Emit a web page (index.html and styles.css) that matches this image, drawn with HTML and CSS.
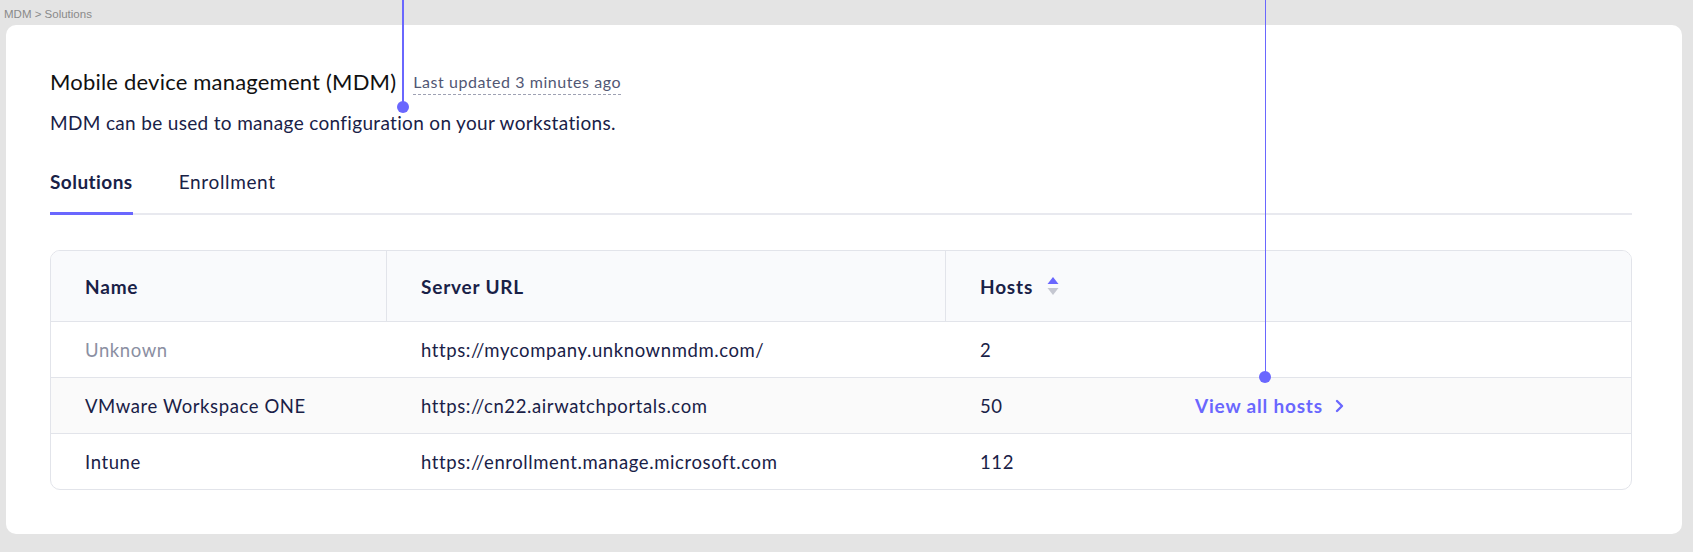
FILE: index.html
```html
<!DOCTYPE html>
<html lang="en">
<head>
<meta charset="utf-8">
<title>MDM Solutions</title>
<link rel="stylesheet" href="styles.css">
</head>
<body>
<div class="page">
  <div class="breadcrumb">MDM &gt; Solutions</div>
  <main class="card">
    <div class="title-row">
      <h1 class="title">Mobile device management (MDM)</h1>
      <span class="updated">Last updated 3 minutes ago</span>
    </div>
    <p class="desc">MDM can be used to manage configuration on your workstations.</p>
    <nav class="tabs">
      <span class="tab active">Solutions</span>
      <span class="tab">Enrollment</span>
    </nav>
    <div class="table">
      <div class="row head">
        <div class="cell hcell">Name</div>
        <div class="cell hcell">Server URL</div>
        <div class="cell hcell last">Hosts
          <svg class="sort" width="12" height="20" viewBox="0 0 12 20"><path d="M6 1 L11.5 8 H0.5 Z" fill="#6a67fe"/><path d="M6 19 L11.5 12 H0.5 Z" fill="#c5c7d1"/></svg>
        </div>
      </div>
      <div class="row">
        <div class="cell muted">Unknown</div>
        <div class="cell">https://mycompany.unknownmdm.com/</div>
        <div class="cell">2</div>
        <div class="cell"></div>
      </div>
      <div class="row hover">
        <div class="cell">VMware Workspace ONE</div>
        <div class="cell">https://cn22.airwatchportals.com</div>
        <div class="cell">50</div>
        <div class="cell"><a class="link">View all hosts <svg class="chev" width="9" height="14" viewBox="0 0 9 14"><path d="M2 2 L7 7 L2 12" fill="none" stroke="#6a67fe" stroke-width="2.4" stroke-linecap="round" stroke-linejoin="round"/></svg></a></div>
      </div>
      <div class="row lastrow">
        <div class="cell">Intune</div>
        <div class="cell">https://enrollment.manage.microsoft.com</div>
        <div class="cell">112</div>
        <div class="cell"></div>
      </div>
    </div>
  </main>
  <div class="pin pin-a"></div>
  <div class="pin pin-b"></div>
</div>
</body>
</html>
```
FILE: styles.css
```css
* { box-sizing: border-box; }
html, body { margin: 0; padding: 0; }
body {
  background: #e4e4e4;
  font-family: Lato, "Noto Sans", sans-serif;
  color: #192147;
  height: 552px;
  overflow: hidden;
}
.page {
  position: relative;
  padding: 0 11px 0 6px;
}
.breadcrumb {
  font-family: "Liberation Sans", Arial, sans-serif;
  font-size: 11.5px;
  color: #8a8a8a;
  height: 25px;
  line-height: 22px;
  padding-top: 3px;
  margin-left: -2px;
}
.card {
  background: #fff;
  border-radius: 10px;
  padding: 42px 50px 44px 44px;
}
.title-row {
  display: flex;
  align-items: center;
  gap: 17px;
}
.title {
  margin: 0;
  font-size: 22px;
  line-height: 30px;
  font-weight: 400;
  letter-spacing: 0.2px;
  color: #111;
}
.updated {
  font-size: 16px;
  line-height: 20px;
  letter-spacing: 0.55px;
  color: #515774;
  border-bottom: 1px dashed #9ea1b3;
  padding-bottom: 2px;
  margin-top: 2px;
}
.desc {
  margin: 12px 0 0;
  font-size: 19px;
  line-height: 28px;
  letter-spacing: 0.33px;
}
.tabs {
  display: flex;
  gap: 46px;
  margin-top: 31px;
  border-bottom: 2px solid #e8e9ef;
}
.tab {
  position: relative;
  font-size: 19px;
  line-height: 28px;
  letter-spacing: 0.65px;
  padding-bottom: 17px;
}
.tab.active { font-weight: 700; letter-spacing: 0.45px; }
.tab.active::after {
  content: "";
  position: absolute;
  left: 0;
  right: 0;
  bottom: -2px;
  height: 3px;
  background: #6a67fe;
}
.table {
  margin-top: 35px;
  border: 1px solid #e2e4ea;
  border-radius: 10px;
  overflow: hidden;
}
.row {
  display: grid;
  grid-template-columns: 336px 559px 216px 1fr;
  height: 56px;
  border-bottom: 1px solid #e2e4ea;
  align-items: stretch;
}
.row.lastrow { border-bottom: none; height: 55px; }
.row.head {
  grid-template-columns: 336px 559px 1fr;
  height: 71px;
  background: #f9fafc;
}
.row.hover { background: #fafafa; }
.cell {
  display: flex;
  align-items: center;
  padding-left: 34px;
  font-size: 18.5px;
  letter-spacing: 0.6px;
  white-space: nowrap;
}
.hcell {
  font-weight: 700;
  font-size: 19px;
  letter-spacing: 0.8px;
  border-right: 1px solid #e2e4ea;
}
.hcell.last { border-right: none; padding-left: 34px; }
.sort { margin-left: 14px; }
.muted { color: #8b8fa2; }
.link {
  color: #6a67fe;
  font-weight: 700;
  font-size: 19px;
  letter-spacing: 0.8px;
  display: inline-flex;
  align-items: center;
  gap: 12px;
  margin-left: -1px;
}
.pin {
  position: absolute;
  top: 0;
  width: 1.5px;
  background: #6a67fe;
}
.pin::after {
  content: "";
  position: absolute;
  left: -5.25px;
  bottom: -6px;
  width: 12px;
  height: 12px;
  border-radius: 50%;
  background: #6a67fe;
}
.pin-a { left: 402px; height: 107px; }
.pin-b { left: 1264.5px; height: 377px; }
```
